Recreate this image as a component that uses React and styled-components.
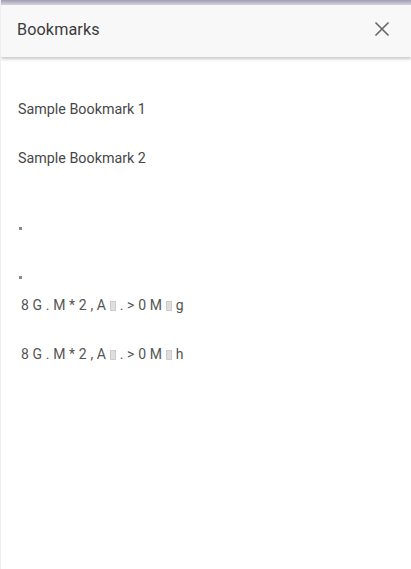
import React from "react";
import styled, { createGlobalStyle } from "styled-components";

const Global = createGlobalStyle`
  html, body { margin: 0; padding: 0; background: #ffffff; }
  body { font-family: Roboto, "Noto Sans", sans-serif; }
`;

const Page = styled.div`
  width: 411px;
  height: 569px;
  display: flex;
  flex-direction: column;
  background: #ffffff;
  border-left: 1px solid #eeeeee;
  box-sizing: border-box;
  overflow: hidden;
`;

const TopShade = styled.div`
  height: 5px;
  flex: none;
  background: linear-gradient(to bottom, #9f9db2, #d6d5de);
`;

const Header = styled.header`
  height: 52px;
  flex: none;
  display: flex;
  align-items: center;
  justify-content: space-between;
  padding: 0 20px 4px 16px;
  box-sizing: border-box;
  background: #f8f8f8;
  box-shadow: 0 2px 3px rgba(0, 0, 0, 0.22);
  position: relative;
  z-index: 1;
`;

const Title = styled.h1`
  margin: 0;
  font-size: 16.2px;
  font-weight: 400;
  color: #3c3c3c;
  letter-spacing: 0.1px;
`;

const CloseButton = styled.button`
  border: 0;
  background: none;
  padding: 0;
  width: 18px;
  height: 18px;
  display: flex;
  align-items: center;
  justify-content: center;
  color: #6a6a6a;
`;

const List = styled.ul`
  list-style: none;
  margin: 0;
  padding: 27px 0 0 0;
  display: flex;
  flex-direction: column;
`;

const Row = styled.li`
  height: 49px;
  display: flex;
  align-items: ${(p) => (p.$bottom ? "flex-end" : "center")};
  padding: ${(p) => (p.$bottom ? "0 0 1px 18px" : "0 0 0 17px")};
  box-sizing: border-box;
  font-size: 14.3px;
  color: #484848;
`;

const Garbled = styled.span`
  font-size: 14px;
  letter-spacing: 3.7px;
  color: #555555;
  padding-left: 3px;
`;

const Tofu = styled.span`
  display: inline-block;
  width: 6px;
  height: 10px;
  background: #dedede;
  border: 1px solid #cccccc;
  box-sizing: border-box;
  margin-right: 4px;
  vertical-align: -1px;
`;

const Dot = styled.span`
  display: block;
  width: 3px;
  height: 3px;
  background: #8a8a8a;
`;

const garbled = (last) => (
  <Garbled>
    8G.M*2,A<Tofu />.&gt;0M<Tofu />{last}
  </Garbled>
);

export default function App() {
  return (
    <>
      <Global />
      <Page>
        <TopShade />
        <Header>
          <Title>Bookmarks</Title>
          <CloseButton aria-label="Close">
            <svg width="16" height="16" viewBox="0 0 16 16">
              <path d="M1.5 1.5 L14.5 14.5 M14.5 1.5 L1.5 14.5" stroke="currentColor" strokeWidth="1.7" fill="none" />
            </svg>
          </CloseButton>
        </Header>
        <List>
          <Row>Sample Bookmark 1</Row>
          <Row>Sample Bookmark 2</Row>
          <Row $bottom><Dot /></Row>
          <Row $bottom><Dot /></Row>
          <Row>{garbled("g")}</Row>
          <Row>{garbled("h")}</Row>
        </List>
      </Page>
    </>
  );
}
